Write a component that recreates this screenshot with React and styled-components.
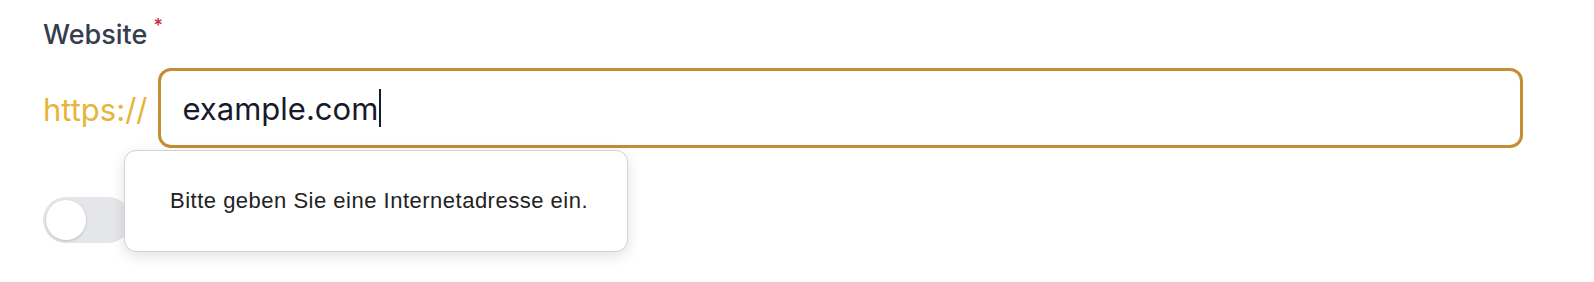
import React from "react";
import styled, { createGlobalStyle } from "styled-components";

const Global = createGlobalStyle`
  html, body {
    margin: 0;
    padding: 0;
    background: #ffffff;
  }
  body {
    font-family: Inter, "Noto Sans", sans-serif;
  }
`;

const Page = styled.div`
  min-height: 100vh;
  box-sizing: border-box;
  padding: 18px 71px 0 43px;
`;

const Field = styled.div`
  position: relative;
`;

const Label = styled.label`
  display: block;
  height: 34px;
  font-size: 27px;
  line-height: 34px;
  font-weight: 500;
  color: #363d4d;
`;

const Required = styled.span`
  display: inline-block;
  vertical-align: top;
  line-height: 1;
  color: #c8243a;
  font-size: 18px;
  margin-left: 6px;
  margin-top: -1px;
`;

const InputRow = styled.div`
  display: flex;
  align-items: center;
  gap: 11px;
  margin-top: 16px;
`;

const Prefix = styled.span`
  font-size: 31px;
  color: #e6b53a;
  font-weight: 400;
  padding-top: 2px;
`;

const Box = styled.div`
  flex: 1;
  height: 80px;
  box-sizing: border-box;
  border: 3px solid #c48e33;
  border-radius: 13px;
  display: flex;
  align-items: center;
  padding-left: 21px;
  font-size: 31px;
  color: #161a2a;
`;

const Caret = styled.span`
  display: inline-block;
  width: 2px;
  height: 38px;
  background: #161a2a;
  margin-left: 1px;
`;

const Tooltip = styled.div`
  position: absolute;
  left: 81px;
  top: 132px;
  width: 504px;
  height: 102px;
  box-sizing: border-box;
  background: #ffffff;
  border: 1px solid #d2d2d2;
  border-radius: 12px;
  box-shadow: 0 4px 14px rgba(0, 0, 0, 0.12);
  display: flex;
  align-items: center;
  padding-left: 45px;
  font-family: "Liberation Sans", Arial, sans-serif;
  font-size: 22px;
  letter-spacing: 0.5px;
  color: #222222;
  z-index: 2;
`;

const ToggleTrack = styled.div`
  margin-top: 49px;
  width: 88px;
  height: 46px;
  border-radius: 23px;
  background: #e5e6ea;
  position: relative;
`;

const Knob = styled.div`
  position: absolute;
  left: 3px;
  top: 3px;
  width: 40px;
  height: 40px;
  border-radius: 50%;
  background: #ffffff;
  box-shadow: 0 1px 3px rgba(0, 0, 0, 0.18);
`;

const App = () => (
  <Page>
    <Global />
    <Field>
      <Label>
        Website<Required>*</Required>
      </Label>
      <InputRow>
        <Prefix>https://</Prefix>
        <Box role="textbox">
          example.com
          <Caret />
        </Box>
      </InputRow>
      <Tooltip>Bitte geben Sie eine Internetadresse ein.</Tooltip>
    </Field>
    <ToggleTrack>
      <Knob />
    </ToggleTrack>
  </Page>
);

export default App;
